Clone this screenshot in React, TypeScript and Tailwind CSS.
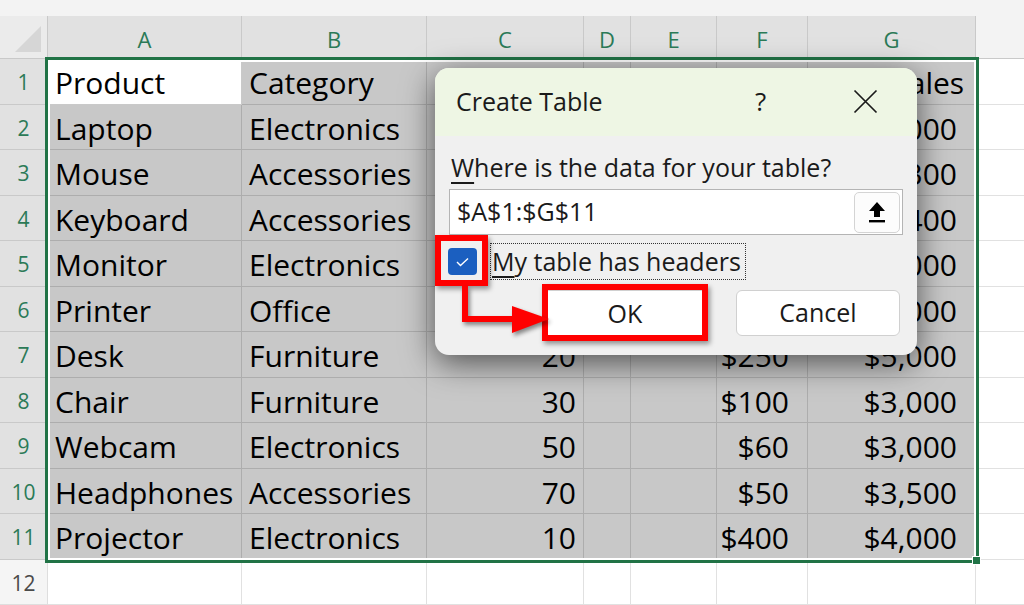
import React from "react";

const COL_W = ["w-[194px]", "w-[185px]", "w-[157px]", "w-[47px]", "w-[86px]", "w-[91px]", "w-[168px]"];
const LETTERS = ["A", "B", "C", "D", "E", "F", "G"];

// cells under the dialog are left blank, they can't be seen anyway
const DATA: string[][] = [
  ["Product", "Category", "Quantity", "", "", "", "Total Sales"],
  ["Laptop", "Electronics", "", "", "", "", "$6,000"],
  ["Mouse", "Accessories", "", "", "", "", "$1,300"],
  ["Keyboard", "Accessories", "", "", "", "", "$2,400"],
  ["Monitor", "Electronics", "", "", "", "", "$9,000"],
  ["Printer", "Office", "", "", "", "", "$6,000"],
  ["Desk", "Furniture", "20", "", "", "$250", "$5,000"],
  ["Chair", "Furniture", "30", "", "", "$100", "$3,000"],
  ["Webcam", "Electronics", "50", "", "", "$60", "$3,000"],
  ["Headphones", "Accessories", "70", "", "", "$50", "$3,500"],
  ["Projector", "Electronics", "10", "", "", "$400", "$4,000"],
];

// right padding for numeric columns (currency format leaves room on the right)
function align(row: number, col: number) {
  if (row === 0 || col < 2) return "justify-start pl-[7px]";
  if (col === 2) return "justify-end pr-[7px]";
  return "justify-end pr-[18px]";
}

function SheetRow({ num, cells }: { num: number; cells?: string[] }) {
  const selected = !!cells;
  return (
    <div className="flex h-[45.5px] shrink-0">
      <div
        className={
          "flex w-[48px] shrink-0 items-center justify-center border-r border-b pt-[3px] text-[21px] " +
          (selected
            ? "bg-[#e1e1e1] border-[#c9c9c9] text-[#2b7a57]"
            : "bg-[#f5f5f5] border-[#dedede] text-[#4a4a4a]")
        }
      >
        {num}
      </div>
      {LETTERS.map((l, i) => {
        const active = num === 1 && i === 0;
        return (
          <div
            key={l}
            className={
              "flex shrink-0 items-center overflow-hidden whitespace-nowrap border-r border-b pt-[3px] text-[30px] text-black " +
              COL_W[i] +
              " " +
              (cells ? align(num - 1, i) : "") +
              " " +
              (active
                ? "bg-white border-[#c9c9c9]"
                : selected
                ? "bg-[#c8c8c8] border-[#adadad]"
                : "bg-white border-[#e1e1e1]")
            }
          >
            {cells ? cells[i] : ""}
          </div>
        );
      })}
      <div className="flex-1 border-b border-[#e1e1e1] bg-white" />
    </div>
  );
}

function UploadIcon() {
  return (
    <svg width="22" height="24" viewBox="0 0 22 24">
      <path d="M11 2 L19 11 H14 V17 H8 V11 H3 Z" fill="#000" />
      <rect x="3" y="20" width="16" height="2.4" fill="#000" />
    </svg>
  );
}

function CreateTableDialog() {
  return (
    <div className="absolute left-[435px] top-[68px] flex h-[287px] w-[482px] flex-col overflow-hidden rounded-[14px] bg-[#f0f0f0] shadow-[0_8px_32px_rgba(0,0,0,0.6)]">
      {/* Title bar */}
      <div className="relative flex h-[68px] shrink-0 items-center bg-[#eef6e4] pl-[21px] text-[25px] text-[#1a1a1a]">
        Create Table
        <span className="absolute left-[320px] top-[14px] text-[26px]">?</span>
        <svg className="absolute left-[418px] top-[21px]" width="25" height="25" viewBox="0 0 25 25">
          <path d="M1.5 1.5 L23.5 23.5 M23.5 1.5 L1.5 23.5" stroke="#1a1a1a" strokeWidth="1.7" />
        </svg>
      </div>

      <div className="flex flex-col px-[14px] text-[25px] text-[#1a1a1a]">
        <div className="mt-[14px] h-[34px] pl-[2px] leading-[34px]">
          <span className="underline decoration-[1.5px] underline-offset-[5px]">W</span>here is the data for your table?
        </div>

        {/* Range input */}
        <div className="mt-[5px] flex h-[46px] items-center border border-[#b4b4b4] bg-white pl-[7px] pr-[2px]">
          <span className="flex-1 text-[25px]">$A$1:$G$11</span>
          <div className="flex h-[41px] w-[46px] items-center justify-center rounded-[5px] border border-[#d4d4d4] bg-[#fcfcfc]">
            <UploadIcon />
          </div>
        </div>

        {/* Checkbox */}
        <div className="mt-[8px] flex h-[37px] items-center">
          <div className="ml-[-1px] flex h-[27px] w-[29px] items-center justify-center rounded-[4px] bg-[#1b5fc0]">
            <svg width="13" height="10" viewBox="0 0 13 10">
              <path d="M1 5 L4.5 8.5 L12 1.5" stroke="#fff" strokeWidth="1.4" fill="none" />
            </svg>
          </div>
          <div className="ml-[13px] flex h-[37px] w-[256px] items-center border border-dotted border-[#333] pl-[1px]">
            <span className="underline decoration-[1.5px] underline-offset-[5px]">M</span>y table has headers
          </div>
        </div>

        {/* Buttons */}
        <div className="mt-[10px] flex justify-end gap-[29px] pr-[3px]">
          <div className="flex h-[47px] w-[164px] items-center justify-center rounded-[6px] border border-[#d0d0d0] bg-white">
            OK
          </div>
          <div className="flex h-[46px] w-[164px] items-center justify-center rounded-[6px] border border-[#d0d0d0] bg-white">
            Cancel
          </div>
        </div>
      </div>
    </div>
  );
}

export default function App() {
  return (
    <div className="relative h-[605px] w-[1024px] overflow-hidden bg-white font-['Open_Sans',sans-serif]">
      {/* strip above the headers */}
      <div className="h-[16px] bg-[#f3f3f3]" />

      {/* Column headers */}
      <div className="flex h-[43px]">
        <div className="relative w-[48px] shrink-0 border-r border-b border-[#c9c9c9] bg-[#ebebeb]">
          <svg className="absolute left-[15px] top-[10px]" width="26" height="26" viewBox="0 0 26 26">
            <path d="M26 0 V26 H0 Z" fill="#d6d6d6" />
          </svg>
        </div>
        {LETTERS.map((l, i) => (
          <div
            key={l}
            className={
              "flex shrink-0 items-center justify-center border-r border-b border-[#c9c9c9] bg-[#e1e1e1] pt-[4px] text-[22px] text-[#2b7a57] " +
              COL_W[i]
            }
          >
            {l}
          </div>
        ))}
        <div className="flex-1 border-b border-[#c9c9c9] bg-[#f3f3f3]" />
      </div>

      {DATA.map((cells, r) => (
        <SheetRow key={r} num={r + 1} cells={cells} />
      ))}
      <SheetRow num={12} />

      {/* Selection border */}
      <div className="absolute left-[45px] top-[57px] h-[506px] w-[934px] border-[3px] border-[#217346] shadow-[inset_0_0_0_2px_#fff]" />
      <div className="absolute left-[972px] top-[556px] h-[9px] w-[9px] border border-white bg-[#217346]" />

      <CreateTableDialog />

      {/* Annotation: red boxes and arrow */}
      <div className="absolute left-[435px] top-[235px] h-[51px] w-[53px] border-[6px] border-[#ff0000] shadow-[2px_3px_5px_rgba(0,0,0,0.4)]" />
      <div className="absolute left-[542px] top-[284px] h-[57px] w-[166px] border-[6px] border-[#ff0000] shadow-[2px_3px_5px_rgba(0,0,0,0.4)]" />
      <svg
        className="absolute left-[455px] top-[280px] drop-shadow-[2px_3px_2px_rgba(0,0,0,0.45)]"
        width="100"
        height="60"
        viewBox="455 280 100 60"
      >
        <path d="M465 286 V319 H516" stroke="#ff0000" strokeWidth="6" fill="none" />
        <polygon points="512,306 549,319 512,333" fill="#ff0000" />
      </svg>
    </div>
  );
}
